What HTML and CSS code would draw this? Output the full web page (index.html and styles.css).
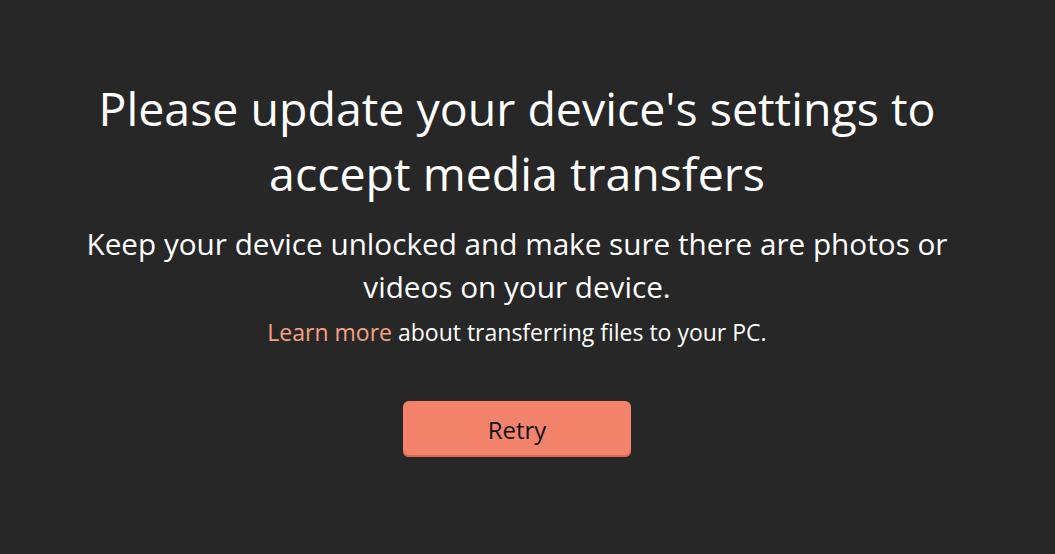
FILE: index.html
```html
<!DOCTYPE html>
<html lang="en">
<head>
<meta charset="utf-8">
<title>Update device settings</title>
<link rel="stylesheet" href="styles.css">
</head>
<body>
<main class="page">
  <h1 class="title">Please update your device's settings to<br>accept media transfers</h1>
  <p class="subtitle">Keep your device unlocked and make sure there are photos or<br>videos on your device.</p>
  <p class="learn"><a class="link" href="#">Learn more</a> about transferring files to your PC.</p>
  <button class="retry" type="button">Retry</button>
</main>
</body>
</html>
```

FILE: styles.css
```css
html, body {
  margin: 0;
  padding: 0;
  background: #272727;
  height: 100%;
}
body {
  font-family: "Open Sans", "Noto Sans", sans-serif;
  color: #ffffff;
}
.page {
  display: flex;
  flex-direction: column;
  align-items: center;
  text-align: center;
  padding: 76px 21px 0 0;
}
.title {
  margin: 0;
  font-size: 46.5px;
  line-height: 65px;
  font-weight: 400;
}
.subtitle {
  margin: 16px 0 0;
  font-size: 29.7px;
  line-height: 43px;
}
.learn {
  margin: 9px 0 0;
  font-size: 23px;
  line-height: 30px;
}
.link {
  color: #f3a283;
  text-decoration: none;
}
.retry {
  margin-top: 54px;
  width: 228px;
  height: 56px;
  border: none;
  border-radius: 6px;
  background: #f3836b;
  box-shadow: inset 0 -2px 0 #d96a54;
  color: #111;
  font-family: inherit;
  font-size: 24px;
  padding: 0;
  cursor: pointer;
}
```
